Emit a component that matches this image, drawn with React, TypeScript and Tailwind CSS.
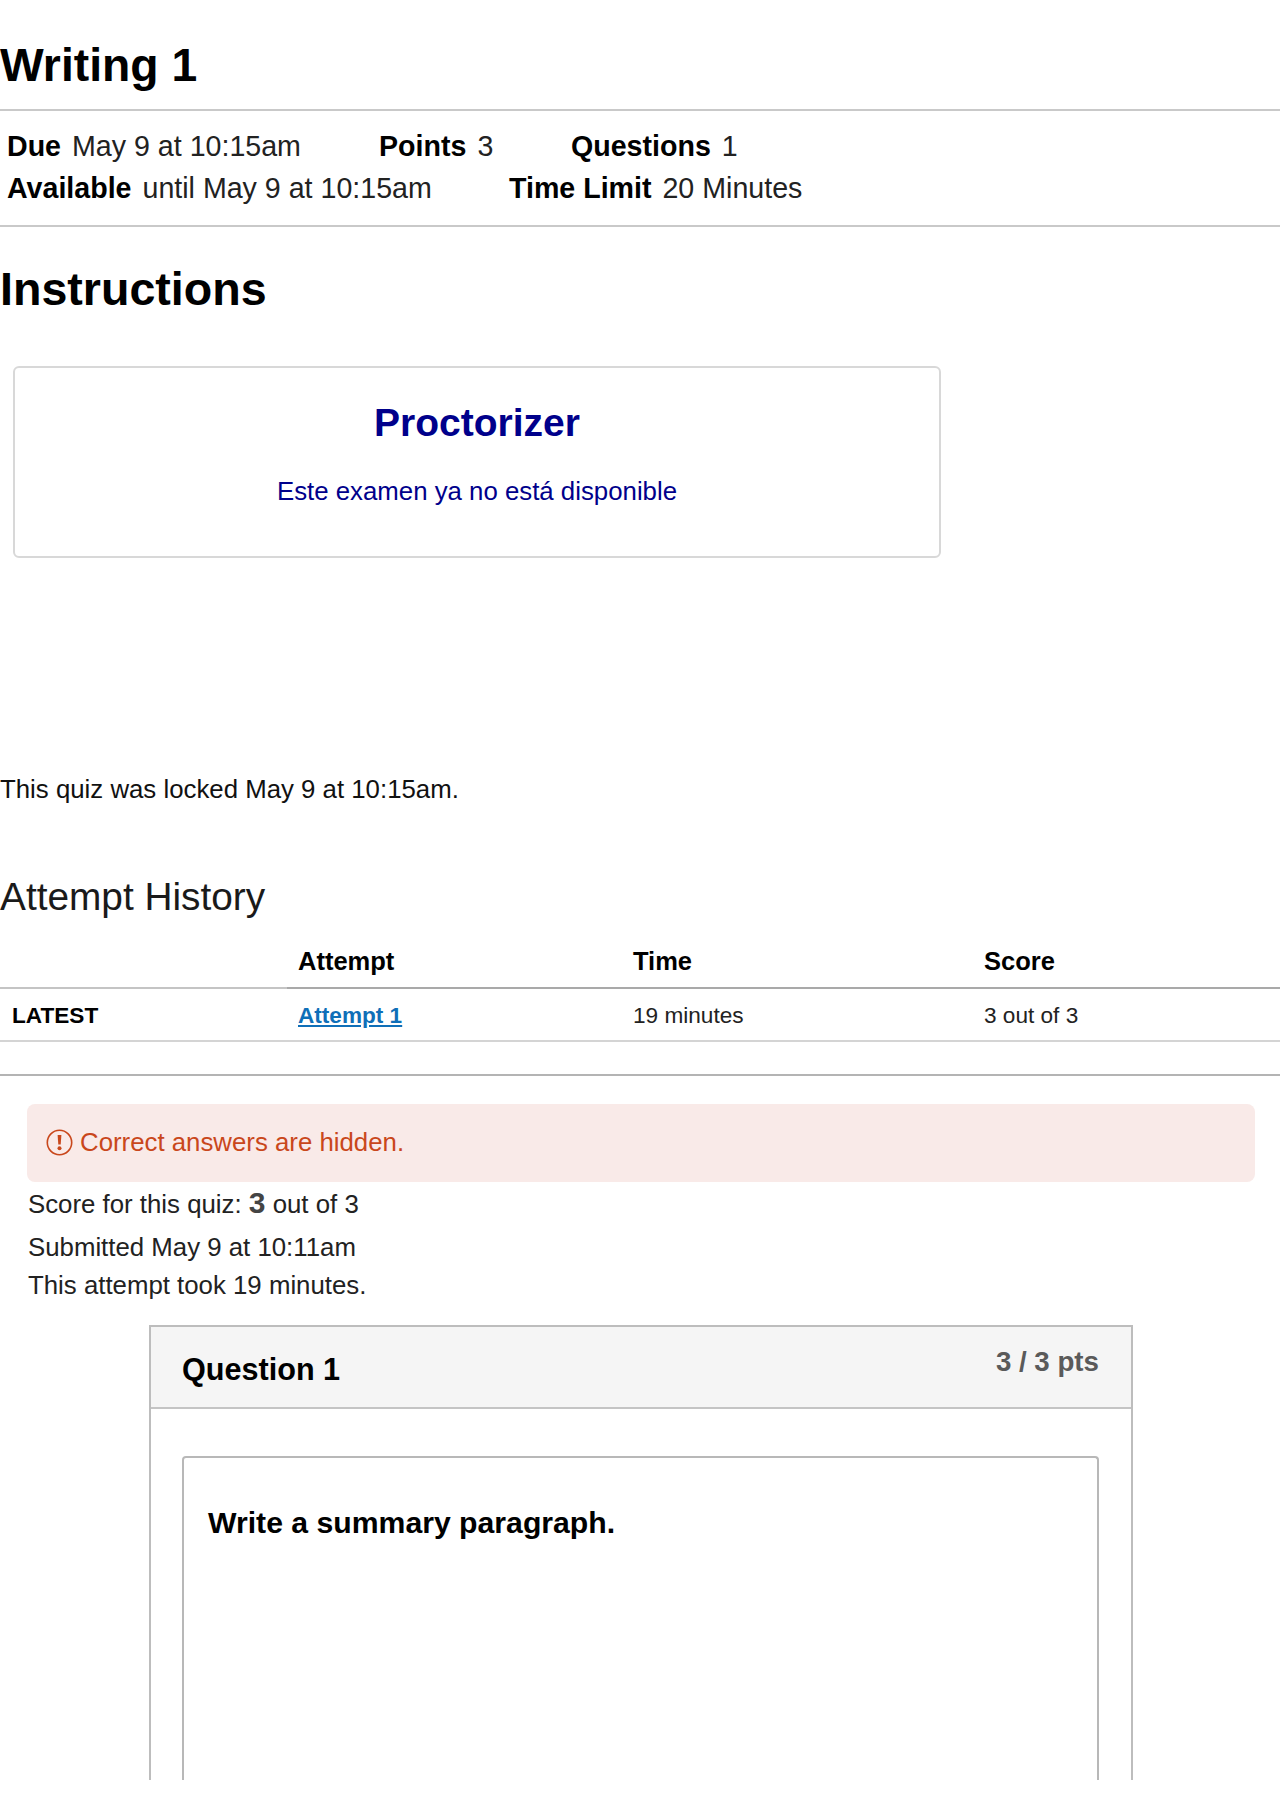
export default function App() {
  const rowCols = "grid grid-cols-[298px_335px_351px_1fr]";
  return (
    <div className="w-[1280px] h-[1812px] bg-white text-black overflow-hidden font-['Liberation_Sans',Arial,sans-serif]">
      <h1 className="pt-[39px] pb-[18px] text-[46.3px] leading-[52px] font-bold border-b-2 border-[#c9c9c9]">Writing 1</h1>
      <div className="pt-[14px] pb-[16px] pl-[7px] text-[28.6px] leading-[42px] text-[#222] border-b-2 border-[#c9c9c9]">
        <div className="flex">
          <span className="w-[372px] flex-none flex"><b className="font-bold text-black mr-[11px]">Due</b>May 9 at 10:15am</span>
          <span className="w-[192px] flex-none flex"><b className="font-bold text-black mr-[11px]">Points</b>3</span>
          <span className="flex"><b className="font-bold text-black mr-[11px]">Questions</b>1</span>
        </div>
        <div className="flex">
          <span className="w-[502px] flex-none flex"><b className="font-bold text-black mr-[11px]">Available</b>until May 9 at 10:15am</span>
          <span className="flex"><b className="font-bold text-black mr-[11px]">Time Limit</b>20 Minutes</span>
        </div>
      </div>
      <h2 className="mt-[36px] text-[46.6px] leading-[52px] font-bold">Instructions</h2>
      <div className="mt-[51px] ml-[13px] w-[928px] h-[192px] border-2 border-[#d8d8d8] rounded-[6px] pt-[31px] text-center text-[#00008b]">
        <div className="text-[39px] leading-[48px] font-bold">Proctorizer</div>
        <div className="mt-[29px] text-[25.8px] leading-[30px]">Este examen ya no está disponible</div>
      </div>
      <p className="mt-[216px] text-[25.8px] leading-[30px] text-[#111]">This quiz was locked May 9 at 10:15am.</p>
      <h3 className="mt-[71px] text-[38.8px] leading-[44px] text-[#1a1a1a]">Attempt History</h3>
      <div className={`${rowCols} h-[70px] items-end pb-[11px] text-[25.5px] leading-[30px] font-bold border-b-2 border-[#c4c4c4] relative`}>
        <div />
        <div>Attempt</div>
        <div>Time</div>
        <div>Score</div>
        <div className="absolute left-[287px] right-0 -bottom-[2px] h-[2px] bg-[#a9a9a9]" />
      </div>
      <div className={`${rowCols} h-[53px] items-center pt-[3px] text-[22.6px] leading-[28px] border-b-2 border-[#d4d4d4] text-[#222]`}>
        <div className="pl-3 font-bold text-black">LATEST</div>
        <a href="#" className="font-bold text-[#0f6fb8] underline justify-self-start">Attempt 1</a>
        <div>19 minutes</div>
        <div>3 out of 3</div>
      </div>
      <div className="mt-[32px] h-[2px] bg-[#b4b4b4]" />
      <div className="mt-[28px] ml-[27px] w-[1228px] h-[78px] rounded-[8px] bg-[#f9eae8] flex items-center pl-[19px] pb-[2px] text-[25.8px] text-[#c9471b]">
        <svg width="27" height="27" viewBox="0 0 27 27" className="mr-[7px] flex-none" fill="none">
          <circle cx="13.5" cy="13.5" r="12.2" stroke="#c9471b" strokeWidth="1.6" />
          <path d="M11.6 6h3.8l-.7 9.5h-2.4z" fill="#c9471b" />
          <circle cx="13.5" cy="19.3" r="2" fill="#c9471b" />
        </svg>
        Correct answers are hidden.
      </div>
      <div className="ml-[28px] text-[25.8px] leading-[30px] text-[#222]">
        <div className="mt-[6px]">Score for this quiz: <b className="text-[30px] leading-[30px] font-bold text-[#444]">3</b> out of 3</div>
        <div className="mt-[13px]">Submitted May 9 at 10:11am</div>
        <div className="mt-[8px]">This attempt took 19 minutes.</div>
      </div>
      <div className="mt-[25px] ml-[149px] w-[984px] h-[455px] border-x-2 border-t-2 border-[#bdbdbd] overflow-hidden">
        <div className="h-[82px] bg-[#f5f5f5] border-b-2 border-[#c4c4c4] flex justify-between pl-[31px] pr-[32px]">
          <div className="mt-[24px] text-[30.6px] leading-[36px] font-bold">Question 1</div>
          <div className="mt-[19px] text-[27.7px] leading-[32px] font-bold text-[#5a5a5a]">3 / 3 pts</div>
        </div>
        <div className="mt-[47px] ml-[31px] w-[917px] h-[400px] border-x-2 border-t-2 border-[#b8b8b8] rounded-t-[4px] pl-[24px] pt-[47px]">
          <div className="text-[30.2px] leading-[36px] font-bold">Write a summary paragraph.</div>
        </div>
      </div>
    </div>
  );
}
